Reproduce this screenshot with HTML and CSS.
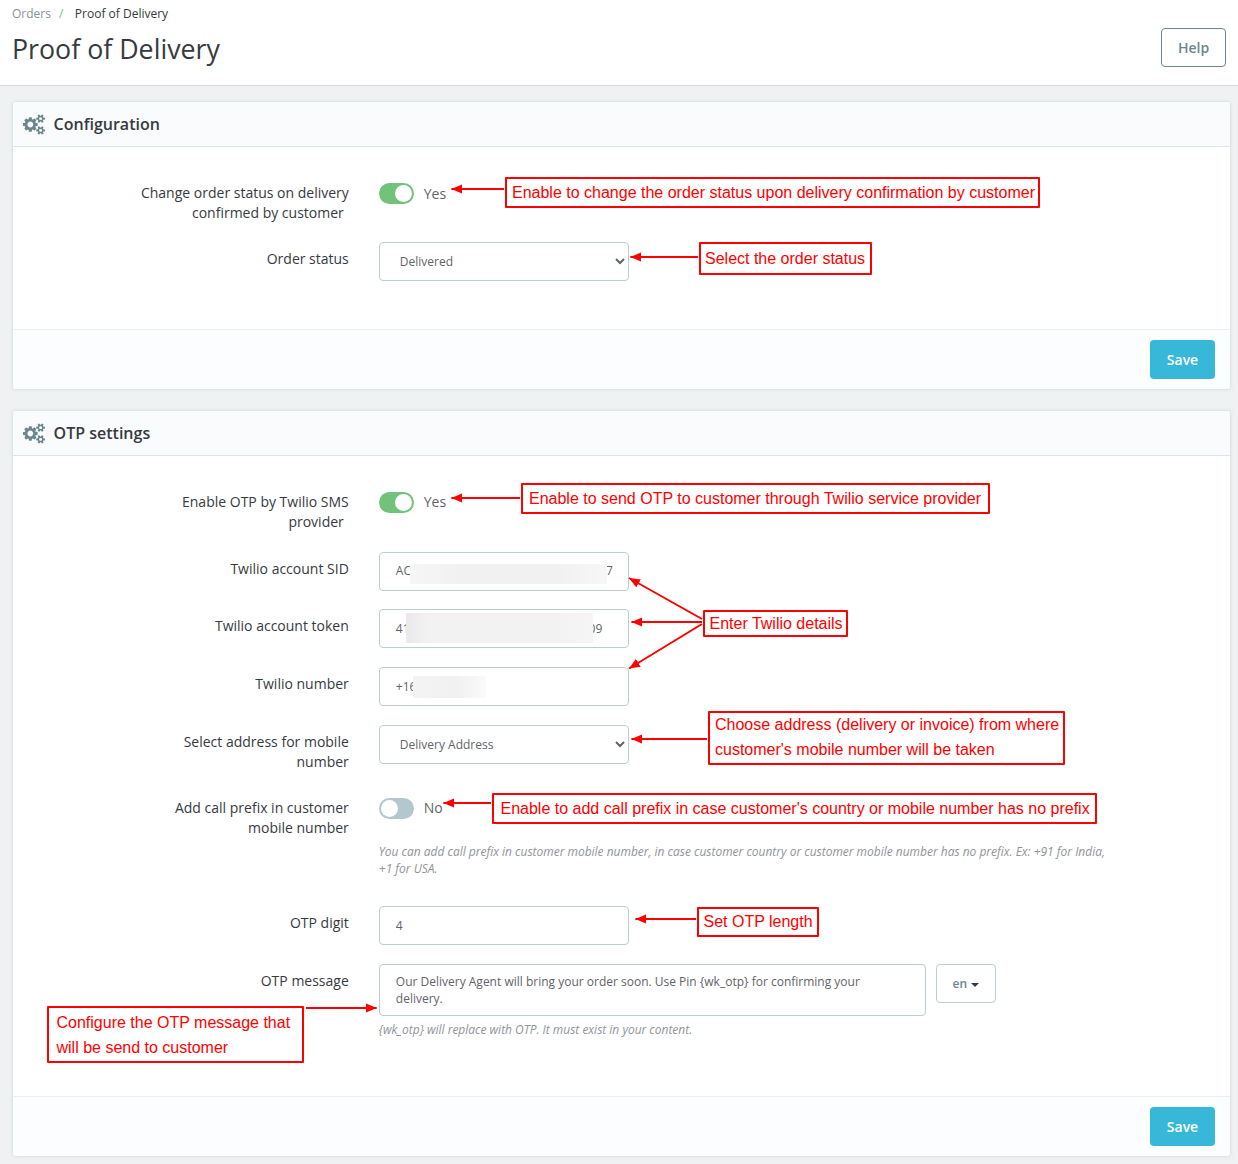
FILE: index.html
```html
<!DOCTYPE html>
<html lang="en">

<head>
    <meta charset="UTF-8">
    <meta name="viewport" content="width=device-width, initial-scale=1.0">
    <title>Proof of Delivery</title>
    <link rel="stylesheet" href="styles.css">
</head>

<body>
    <svg class="defs" width="0" height="0">
        <symbol id="cogs" viewBox="0 0 1920 1792">
            <path d="M896 896q0-106-75-181t-181-75-181 75-75 181 75 181 181 75 181-75 75-181zm768 512q0-52-38-90t-90-38-90 38-38 90q0 53 37.500 90.500t90.500 37.500 90.500-37.500 37.500-90.500zm0-1024q0-52-38-90t-90-38-90 38-38 90q0 53 37.500 90.500t90.500 37.500 90.500-37.500 37.500-90.500zm-384 421v185q0 10-7 19.500t-16 10.500l-155 24q-11 35-32 76 34 48 90 115 7 11 7 20 0 12-7 19-23 30-82.500 89.500t-78.500 59.500q-11 0-21-7l-115-90q-37 19-77 31-11 108-23 155-7 24-30 24h-186q-11 0-20-7.500t-10-17.500l-23-153q-34-10-75-31l-118 89q-7 7-20 7-11 0-21-8-144-133-144-160 0-9 7-19 10-14 41-53t47-61q-23-44-35-82l-152-24q-10-1-17-9.500t-7-19.500v-185q0-10 7-19.500t16-10.500l155-24q11-35 32-76-34-48-90-115-7-11-7-20 0-12 7-20 22-30 82-89t79-59q11 0 21 7l115 90q34-18 77-32 11-108 23-154 7-24 30-24h186q11 0 20 7.500t10 17.500l23 153q34 10 75 31l118-89q8-7 20-7 11 0 21 8 144 133 144 160 0 8-7 19-12 16-42 54t-45 60q23 48 34 82l152 23q10 2 17 10.500t7 19.500zm640 533v140q0 16-149 31-12 27-30 52 51 113 51 138 0 4-4 7-122 71-124 71-8 0-46-47t-52-68q-20 2-30 2t-30-2q-14 21-52 68t-46 47q-2 0-124-71-4-3-4-7 0-25 51-138-18-25-30-52-149-15-149-31v-140q0-16 149-31 13-29 30-52-51-113-51-138 0-4 4-7 4-2 35-20t59-34 30-16q8 0 46 46.500t52 67.500q20-2 30-2t30 2q51-71 92-112l6-2q4 0 124 70 4 3 4 7 0 25-51 138 17 23 30 52 149 15 149 31zm0-1024v140q0 16-149 31-12 27-30 52 51 113 51 138 0 4-4 7-122 71-124 71-8 0-46-47t-52-68q-20 2-30 2t-30-2q-14 21-52 68t-46 47q-2 0-124-71-4-3-4-7 0-25 51-138-18-25-30-52-149-15-149-31v-140q0-16 149-31 13-29 30-52-51-113-51-138 0-4 4-7 4-2 35-20t59-34 30-16q8 0 46 46.500t52 67.500q20-2 30-2t30 2q51-71 92-112l6-2q4 0 124 70 4 3 4 7 0 25-51 138 17 23 30 52 149 15 149 31z" />
        </symbol>
    </svg>

    <header class="page-head">
        <div>
            <nav class="breadcrumb"><a>Orders</a><span class="slash">/</span><span>Proof of Delivery</span></nav>
            <h1 class="page-title">Proof of Delivery</h1>
        </div>
        <button class="btn btn-help">Help</button>
    </header>

    <main class="content">
        <section class="panel">
            <h2 class="panel-heading"><svg class="icon"><use href="#cogs" /></svg>Configuration</h2>
            <div class="panel-body body-config">
                <div class="row row-switch">
                    <label class="label">Change order status on delivery<br>confirmed by customer<span class="pad"></span></label>
                    <div class="switch-line"><span class="switch on"></span>Yes</div>
                </div>
                <div class="row">
                    <label class="label">Order status</label>
                    <div><select class="control"><option>Delivered</option></select></div>
                </div>
            </div>
            <div class="panel-footer"><button class="btn btn-save">Save</button></div>
        </section>

        <section class="panel">
            <h2 class="panel-heading"><svg class="icon"><use href="#cogs" /></svg>OTP settings</h2>
            <div class="panel-body body-otp">
                <div class="row row-switch">
                    <label class="label">Enable OTP by Twilio SMS<br>provider<span class="pad"></span></label>
                    <div class="switch-line"><span class="switch on"></span>Yes</div>
                </div>
                <div class="row">
                    <label class="label">Twilio account SID</label>
                    <div class="control masked"><span>AC</span><i class="mask mask-sid"></i><span>7</span></div>
                </div>
                <div class="row">
                    <label class="label">Twilio account token</label>
                    <div class="control masked"><span>41</span><i class="mask mask-token"></i><span class="tail-token">09</span></div>
                </div>
                <div class="row">
                    <label class="label">Twilio number</label>
                    <div class="control masked"><span>+16</span><i class="mask mask-number"></i></div>
                </div>
                <div class="row">
                    <label class="label">Select address for mobile<br>number</label>
                    <div><select class="control"><option>Delivery Address</option></select></div>
                </div>
                <div class="row row-prefix">
                    <label class="label">Add call prefix in customer<br>mobile number</label>
                    <div>
                        <div class="switch-line"><span class="switch"></span>No</div>
                        <p class="help-text">You can add call prefix in customer mobile number, in case customer country or customer mobile number has no prefix. Ex: +91 for India,<br>+1 for USA.</p>
                    </div>
                </div>
                <div class="row">
                    <label class="label">OTP digit</label>
                    <div><input class="control" type="text" value="4"></div>
                </div>
                <div class="row">
                    <label class="label">OTP message</label>
                    <div class="message-line">
                        <div>
                            <textarea class="control message">Our Delivery Agent will bring your order soon. Use Pin {wk_otp} for confirming your delivery.</textarea>
                            <p class="hint">{wk_otp} will replace with OTP. It must exist in your content.</p>
                        </div>
                        <button class="btn btn-lang">en<span class="caret"></span></button>
                    </div>
                </div>
            </div>
            <div class="panel-footer"><button class="btn btn-save">Save</button></div>
        </section>
    </main>

    <!-- notes laid over the form -->
    <svg class="arrows" width="1238" height="1164">
        <defs>
            <marker id="head" viewBox="0 0 11 10" refX="11" refY="5" markerWidth="11" markerHeight="10" markerUnits="userSpaceOnUse" orient="auto">
                <path d="M0 0.400L11 5L0 9.600z" fill="#f00" />
            </marker>
        </defs>
        <g class="shaft">
            <path d="M504 189H451.400" />
            <path d="M698 257H630.400" />
            <path d="M520 498H451.400" />
            <path d="M702 619L629 578" />
            <path d="M702 622H631.400" />
            <path d="M702 624L629 668.500" />
            <path d="M707 739H631.400" />
            <path d="M491 803H443.400" />
            <path d="M696 919H635.400" />
            <path d="M306 1008H376.700" />
        </g>
    </svg>
    <div class="note note-status">Enable to change the order status upon delivery confirmation by customer</div>
    <div class="note note-select">Select the order status</div>
    <div class="note note-otp">Enable to send OTP to customer through Twilio service provider</div>
    <div class="note note-twilio">Enter Twilio details</div>
    <div class="note note-address"><div class="note-text">Choose address (delivery or invoice) from where<br>customer's mobile number will be taken</div></div>
    <div class="note note-prefix">Enable to add call prefix in case customer's country or mobile number has no prefix</div>
    <div class="note note-length">Set OTP length</div>
    <div class="note note-message">Configure the OTP message that<br>will be send to customer</div>
</body>

</html>
```
FILE: styles.css
```css
* {
    box-sizing: border-box;
}

body {
    margin: 0;
    height: 1164px;
    overflow: hidden;
    position: relative;
    background-color: #eff1f2;
    color: #363a41;
    font-family: "Open Sans", sans-serif;
    font-size: 14px;
    line-height: 20px;
}

.defs {
    position: absolute;
}

.page-head {
    display: flex;
    justify-content: space-between;
    align-items: flex-start;
    height: 86px;
    padding: 5px 12px 0;
    background-color: #fff;
    border-bottom: 1px solid #d3dbde;
}

.breadcrumb {
    font-size: 12px;
    line-height: 17px;
}

.breadcrumb a {
    color: #8c9196;
}

.slash {
    color: #72c279;
    margin: 0 11.5px 0 8px;
}

.page-title {
    margin: 9px 0 0;
    font-size: 26.75px;
    font-weight: 400;
    line-height: 36px;
}

.btn {
    height: 39px;
    border-radius: 4px;
    font-family: inherit;
    font-size: 14px;
    font-weight: 600;
    padding: 0;
}

.btn-help {
    width: 65px;
    margin-top: 23px;
    background-color: #fff;
    border: 1px solid #6c868e;
    color: #6c868e;
}

.content {
    padding: 15px 7px 0 12px;
}

.panel {
    background-color: #fff;
    border: 1px solid #dbe6e9;
    border-radius: 4px;
    box-shadow: 0 0 4px rgba(0, 0, 0, 0.06);
    margin-bottom: 20px;
    overflow: hidden;
}

.panel-heading {
    display: flex;
    align-items: center;
    height: 45px;
    margin: 0;
    padding-left: 10px;
    background-color: #fafbfc;
    border-bottom: 1px solid #dbe6e9;
    font-size: 16px;
    font-weight: 600;
}

.icon {
    width: 22px;
    height: 21px;
    margin-right: 8.6px;
    margin-top: 1px;
    fill: #6c868e;
}

.body-config {
    height: 182px;
    padding-top: 29px;
}

.body-otp {
    height: 640px;
    padding-top: 28.7px;
}

.row {
    display: grid;
    grid-template-columns: 335.8px 750px;
    column-gap: 30px;
    align-items: start;
    margin-bottom: 19px;
}

.row-switch {
    height: 48px;
}

.body-config .row-switch {
    height: 47px;
}

.row-prefix {
    height: 96.3px;
}

.label {
    padding-top: 7px;
    min-height: 38.67px;
    text-align: right;
}

.pad {
    display: inline-block;
    width: 5px;
}

.switch-line {
    display: flex;
    align-items: center;
    gap: 10px;
    height: 22px;
    margin-top: 6.6px;
    color: #5f6469;
}

.switch {
    width: 35px;
    height: 21px;
    border-radius: 11px;
    background-color: #b3c7cd;
    padding: 2px;
}

.switch::after {
    content: "";
    display: block;
    width: 17px;
    height: 17px;
    border-radius: 50%;
    background-color: #fff;
}

.switch.on {
    background-color: #72c279;
}

.switch.on::after {
    margin-left: 14px;
}

.control {
    display: block;
    width: 250px;
    height: 39px;
    margin: 0 0 -0.4px;
    padding: 0 16px;
    border: 1px solid #bbcdd2;
    border-radius: 4px;
    background-color: #fff;
    color: #5f6469;
    font-family: inherit;
    font-size: 12px;
}

select.control {
    padding: 0 0 0 16px;
}

.masked {
    display: flex;
    align-items: center;
}

.mask {
    flex: none;
    position: relative;
    background: linear-gradient(90deg, #f6f6f7, #f1f1f2 25%, #f1f1f2 75%, #f7f7f8);
}

.mask-sid {
    width: 197px;
    height: 20px;
    margin-left: -1px;
    margin-right: -1px;
    top: 3px;
}

.mask-token {
    width: 187px;
    height: 30px;
    margin-left: -4px;
    top: -1px;
    background: linear-gradient(90deg, #e9e9ec, #f2f2f3 12%, #f2f2f3 80%, #f5f5f6);
}

.mask-number {
    width: 73px;
    height: 22px;
    margin-left: -3.5px;
    background: linear-gradient(90deg, #f3f3f4, #f1f1f2 60%, #fafafa);
}

.tail-token {
    margin-left: -4px;
}

.help-text {
    margin: 23.7px 0 0;
    color: #8f9499;
    font-size: 11.98px;
    font-style: italic;
    line-height: 17px;
    white-space: nowrap;
}

.message-line {
    display: flex;
    gap: 10px;
    align-items: flex-start;
}

.message {
    width: 547px;
    height: 52px;
    padding: 8px 16px;
    line-height: 17px;
    resize: none;
    overflow: hidden;
}

.hint {
    margin: 5.4px 0 0;
    color: #8f9499;
    font-size: 11.98px;
    font-style: italic;
    line-height: 17px;
}

.btn-lang {
    width: 60px;
    background-color: #fff;
    border: 1px solid #bbcdd2;
    color: #6c868e;
    font-size: 12px;
}

.caret {
    display: inline-block;
    margin-left: 4px;
    vertical-align: 1px;
    border: 4px solid transparent;
    border-top-color: #363a41;
    border-bottom: 0;
}

.panel-footer {
    display: flex;
    justify-content: flex-end;
    height: 60px;
    padding: 10px 15px;
    background-color: #fcfdfe;
    border-top: 1px solid #eaeef0;
}

.btn-save {
    width: 65px;
    background-color: #38b8d8;
    border: 0;
    color: #fff;
}

/* notes */
.arrows {
    position: absolute;
    left: 0;
    top: 0;
}

.shaft path {
    stroke: #f00;
    stroke-width: 2;
    fill: none;
    marker-end: url(#head);
}

.note {
    position: absolute;
    border: 2px solid #f00;
    border-radius: 1px;
    color: #f00;
    font-family: "Liberation Sans", Arial, sans-serif;
    font-size: 16px;
    line-height: 25px;
    white-space: nowrap;
}

.note-status {
    left: 505px;
    top: 177px;
    width: 535px;
    height: 31px;
    padding: 1px 0 0 5px;
}

.note-select {
    left: 699px;
    top: 242px;
    width: 173px;
    height: 33px;
    padding: 2px 0 0 4px;
}

.note-otp {
    left: 521px;
    top: 483px;
    width: 469px;
    height: 31px;
    padding: 1px 0 0 6px;
}

.note-twilio {
    left: 703px;
    top: 610px;
    width: 145px;
    height: 27px;
    padding-left: 4.5px;
    line-height: 24px;
}

.note-address {
    left: 708px;
    top: 711px;
    width: 357px;
    height: 54px;
    padding-left: 5px;
}

.note-text {
    margin-top: -1px;
}

.note-prefix {
    left: 492px;
    top: 793px;
    width: 605px;
    height: 31px;
    padding: 1px 0 0 6.5px;
}

.note-length {
    left: 697px;
    top: 907px;
    width: 122px;
    height: 30px;
    padding-left: 4.5px;
}

.note-message {
    left: 47px;
    top: 1006px;
    width: 257px;
    height: 57px;
    padding: 2px 0 0 7.5px;
}
```
